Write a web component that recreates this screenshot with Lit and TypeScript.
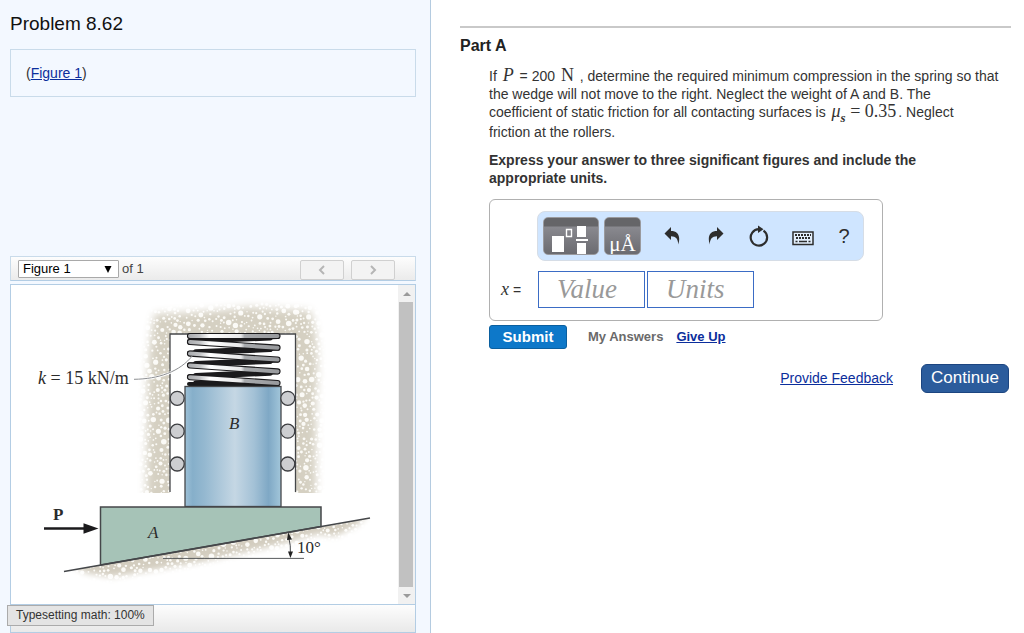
import { LitElement, html, svg, css } from "lit";
import { customElement, state } from "lit/decorators.js";

interface Pebble {
  x: number;
  y: number;
  r: number;
}

/** Scatters non-overlapping pebbles over an area; the sequence is repeatable. */
function scatter(x0: number, y0: number, x1: number, y1: number, tries: number, seed: number): Pebble[] {
  let s = seed;
  const next = () => {
    s = (s * 1664525 + 1013904223) % 4294967296;
    return s / 4294967296;
  };
  const out: Pebble[] = [];
  for (let i = 0; i < tries; i++) {
    const big = i < tries * 0.06;
    const p = {
      x: x0 + next() * (x1 - x0),
      y: y0 + next() * (y1 - y0),
      r: big ? 2 + next() * 0.8 : 0.7 + next() * 0.9,
    };
    if (out.every((q) => Math.hypot(q.x - p.x, q.y - p.y) > q.r + p.r + 0.7)) out.push(p);
  }
  return out;
}

const WALL_PEBBLES = [
  ...scatter(138, 304, 170, 493, 900, 11),
  ...scatter(170, 304, 296, 334, 560, 23),
  ...scatter(296, 304, 326, 493, 860, 37),
];
const SLOPE_PEBBLES = scatter(60, 516, 372, 586, 3000, 51);

const FRONT_COILS = [
  [336, 336],
  [342, 347.7],
  [353.6, 359.6],
  [365.4, 371.4],
  [377.2, 383],
];
const BACK_COILS = [
  [337, 341],
  [348.6, 352.8],
  [360.4, 364.6],
  [372.2, 376.4],
  [384, 384],
];
const ROLLERS = [398.3, 431.2, 464];

@customElement("wedge-figure")
export class WedgeFigure extends LitElement {
  static styles = css`
    :host {
      display: block;
    }
    svg {
      display: block;
      width: 100%;
      height: auto;
    }
    text {
      font-family: "Liberation Serif", serif;
      font-size: 17px;
      fill: #2b2b2b;
    }
    .it {
      font-style: italic;
    }
    .large {
      font-size: 18px;
    }
    .bold {
      font-weight: bold;
    }
    .ink {
      stroke: #45474a;
      fill: none;
    }
  `;

  render() {
    return html`
      <svg viewBox="11 286 387 318" role="img" aria-label="Wedge A under spring-loaded block B">
        <defs>
          <linearGradient id="block" x1="0" x2="1" y1="0" y2="0">
            <stop offset="0" stop-color="#9dc0d6" />
            <stop offset="0.08" stop-color="#86afca" />
            <stop offset="0.2" stop-color="#94b8d0" />
            <stop offset="0.52" stop-color="#c5d7e4" />
            <stop offset="0.72" stop-color="#a3c1d6" />
            <stop offset="0.87" stop-color="#7fa8c5" />
            <stop offset="1" stop-color="#a2c6da" />
          </linearGradient>
          <linearGradient id="coil" gradientUnits="userSpaceOnUse" x1="187" x2="280" y1="0" y2="0">
            <stop offset="0" stop-color="#a5a7aa" />
            <stop offset="0.14" stop-color="#c4c5c7" />
            <stop offset="0.24" stop-color="#ffffff" />
            <stop offset="0.58" stop-color="#e8e8e9" />
            <stop offset="0.62" stop-color="#a8aaad" />
            <stop offset="1" stop-color="#97999c" />
          </linearGradient>
          <filter id="soft" x="-20%" y="-20%" width="140%" height="140%">
            <feGaussianBlur stdDeviation="4" />
          </filter>
          <filter id="softer" x="-20%" y="-40%" width="140%" height="180%">
            <feGaussianBlur stdDeviation="3" />
          </filter>
          <mask id="wallFade" maskUnits="userSpaceOnUse" x="120" y="290" width="230" height="203">
            <path
              d="M155 314 Q200 313 250 307 L310 311 Q321 340 316 400 L316 520 L146 520 L147 400 Q148 340 155 314Z"
              fill="#fff"
              filter="url(#soft)"
            />
          </mask>
          <mask id="slopeFade" maskUnits="userSpaceOnUse" x="50" y="500" width="340" height="100">
            <path
              d="M70 564 L86 573 L112 577 L200 562 L270 547 L318 534 L335 536 L356 526 L368 515Z"
              fill="#fff"
              filter="url(#softer)"
            />
          </mask>
          <clipPath id="underSlope">
            <path d="M64 571.5 L370 518 L370 600 L64 600Z" />
          </clipPath>
        </defs>

        <g mask="url(#wallFade)">
          <rect x="120" y="290" width="230" height="203" fill="#d5d0c2" />
          ${WALL_PEBBLES.map((p) => svg`<circle cx=${p.x} cy=${p.y} r=${p.r} fill="#fbfaf6" />`)}
        </g>
        <path d="M170 494 V334 H295.5 V494Z" fill="#fff" />
        <path class="ink" d="M170 492 V334 H295.5 V492" stroke-width="1.3" />

        <g stroke-linecap="round">
          ${BACK_COILS.map(
            ([r, l]) => svg`
              <path d="M189 ${l} L278 ${r}" stroke="#1b1a1c" stroke-width="4" />
              <path d="M196 ${l - 0.5} L270 ${r + 0.5}" stroke="#1b1a1c" stroke-width="6" />`
          )}
          ${FRONT_COILS.map(
            ([l, r]) => svg`
              <path d="M190 ${l} L277.500 ${r + 0.01}" stroke="#1b1a1c" stroke-width="6.2" />
              <path d="M190 ${l} L277.500 ${r + 0.01}" stroke="url(#coil)" stroke-width="4" />`
          )}
        </g>

        <rect class="ink" x="185" y="386.5" width="96" height="120" style="fill:url(#block)" stroke-width="1.3" />
        ${ROLLERS.map(
          (y) => svg`
            <circle cx="177.2" cy=${y} r="7" fill="#cdced1" stroke="#3c3d40" stroke-width="1.3" />
            <circle cx="287.8" cy=${y} r="7" fill="#cdced1" stroke="#3c3d40" stroke-width="1.3" />`
        )}

        <g clip-path="url(#underSlope)">
          <g mask="url(#slopeFade)">
            <rect x="50" y="500" width="340" height="100" fill="#d3cdbf" />
            ${SLOPE_PEBBLES.map((p) => svg`<circle cx=${p.x} cy=${p.y} r=${p.r} fill="#fbfaf6" />`)}
          </g>
        </g>
        <path d="M100.5 507 H321 V526.6 L100.5 565.1Z" fill="#a6c3b7" stroke="#45474a" stroke-width="1.5" />
        <path class="ink" d="M64 571.5 L370 518" stroke-width="1.6" />
        <path class="ink" d="M163 558.4 H304" stroke-width="0.9" />

        <path class="ink" d="M288.6 536 Q291 546 290.4 555" stroke-width="1" />
        <path d="M288.2 532.6 L292 539.4 L287 540Z M290.4 558 L288 551.4 L293 551.6Z" fill="#222" />

        <path d="M44 528.5 H86" stroke="#1b1a1c" stroke-width="2.6" />
        <path d="M98.5 528.5 L83.5 523.2 V533.8Z" fill="#1b1a1c" />
        <path d="M134 379.3 C158 379 180 372 190 358" fill="none" stroke="#fff" stroke-width="2.4" />
        <path d="M134 379.3 C158 379 180 372 193 355" fill="none" stroke="#8d8f92" stroke-width="1" />

        <text class="large" x="38" y="384"><tspan class="it">k</tspan> = 15 kN/m</text>
        <text class="it" x="229" y="429">B</text>
        <text class="it" x="148" y="538">A</text>
        <text class="bold" x="53" y="520">P</text>
        <text x="297" y="553">10°</text>
      </svg>
    `;
  }
}

@customElement("app-root")
export class AppRoot extends LitElement {
  @state() private value = "";
  @state() private units = "";

  static styles = css`
    :host {
      display: block;
      font-family: "Liberation Sans", Arial, sans-serif;
      font-size: 14px;
      line-height: 18px;
      color: #333;
      background: #fff;
    }
    * {
      box-sizing: border-box;
    }
    button,
    input,
    select {
      font: inherit;
      margin: 0;
      padding: 0;
    }
    a {
      color: #0b2e9c;
    }
    .page {
      display: grid;
      grid-template-columns: 431px minmax(0, 1fr);
      min-height: 100vh;
    }
    .side {
      display: flex;
      flex-direction: column;
      padding: 13px 14px 0 10px;
      background: #f3f8ff;
      border-right: 1px solid #b4cbe0;
    }
    .title {
      margin: 0;
      font-size: 19px;
      line-height: 22px;
      font-weight: normal;
      color: #111;
    }
    .intro {
      margin: 14px 0 0;
      padding: 14px 15px;
      border: 1px solid #c9dbea;
    }
    .viewer {
      margin-top: auto;
    }
    .bar {
      display: flex;
      align-items: center;
      height: 25px;
      padding: 0 20px 0 7px;
      font-size: 13px;
      color: #444;
      border: 1px solid #c9dbea;
      border-bottom-color: #b3cde4;
      background: linear-gradient(#fdfdfd, #ebebeb);
    }
    .pick {
      display: grid;
      width: 101px;
      margin-right: 3px;
    }
    .pick select,
    .pick svg {
      grid-area: 1 / 1;
    }
    .pick select {
      appearance: none;
      height: 18px;
      padding-left: 4px;
      line-height: 16px;
      color: #000;
      background: #fff;
      border: 1px solid #a9a9a9;
      border-radius: 1px;
    }
    .pick svg {
      justify-self: end;
      align-self: center;
      margin-right: 7px;
      pointer-events: none;
    }
    .steps {
      display: flex;
      gap: 7px;
      margin-left: auto;
      align-self: flex-end;
    }
    .step {
      display: grid;
      place-items: center;
      width: 44px;
      height: 20px;
      background: #f3f3f3;
      border: 1px solid #d0d0d0;
      border-radius: 2px;
    }
    .frame {
      display: flex;
      margin-top: 3px;
      background: #fff;
      border: 1px solid #b3cde4;
      border-bottom: 0;
    }
    .frame wedge-figure {
      flex: 1;
      margin-top: 1px;
    }
    .scroll {
      display: flex;
      flex-direction: column;
      width: 17px;
      background: #f1f1f1;
    }
    .arrow {
      display: grid;
      place-items: center;
      height: 17px;
      border: 0;
      background: none;
    }
    .thumb {
      flex: 1;
      margin: 0 2px 0 1px;
      background: #c1c1c1;
    }
    .foot {
      height: 29px;
      border: 1px solid #b3cde4;
      background: linear-gradient(#fdfdfd, #e9e9e9);
    }
    .status {
      position: fixed;
      left: 7px;
      bottom: 7px;
      padding: 1px 8px;
      font-size: 12px;
      line-height: 17px;
      color: #333;
      background: #e4e4e4;
      border: 1px solid #ababab;
    }
    .main {
      padding: 26px 13px 0 29px;
    }
    .rule {
      height: 2px;
      margin: 0;
      border: 0;
      background: #c9c9c9;
    }
    .part {
      margin: 9px 0 0;
      font-size: 16px;
      color: #222;
    }
    .body {
      padding-left: 29px;
    }
    .task {
      margin: 12px 0 0;
    }
    .task p {
      margin: 0;
      white-space: nowrap;
    }
    .task .ask {
      margin-top: 10px;
      font-weight: bold;
    }
    .math {
      margin: 0 2px;
      font-family: "Liberation Serif", serif;
      font-size: 18px;
      line-height: 16px;
    }
    .math sub {
      font-size: 13px;
      font-weight: bold;
      line-height: 10px;
    }
    .answer {
      width: 394px;
      margin-top: 12px;
      padding: 11px 18px 12px 11px;
      border: 1px solid #b0b0b0;
      border-radius: 6px;
    }
    .tools {
      display: flex;
      align-items: center;
      height: 50px;
      margin-left: 36px;
      padding-left: 5px;
      border: 1px solid #d6dde6;
      border-radius: 8px;
      background: #cfe5ff;
    }
    .tool {
      display: grid;
      place-items: center;
      flex: 1;
      height: 38px;
      border: 0;
      color: #2d2d2d;
      background: none;
    }
    .tile {
      flex: none;
      overflow: hidden;
      color: #fff;
      border: 1px solid #9a9a9e;
      border-radius: 5px;
      background: linear-gradient(#656568 0 8px, #89898f 9px, #6b6b70);
    }
    .wide {
      width: 56px;
      margin-right: 5px;
    }
    .narrow {
      width: 37px;
      margin-right: 9px;
      place-items: end center;
      font-family: "Liberation Serif", serif;
      font-size: 21px;
      line-height: 20px;
    }
    .help {
      flex: none;
      width: 38px;
      font-size: 20px;
    }
    .row {
      display: flex;
      align-items: center;
      gap: 2px;
      margin-top: 10px;
    }
    .var {
      width: 35px;
      font-size: 14px;
    }
    .var i {
      font-family: "Liberation Serif", serif;
      font-size: 18px;
    }
    .field {
      width: 107px;
      height: 37px;
      padding-left: 18px;
      font-family: "Liberation Serif", serif;
      font-size: 27px;
      font-style: italic;
      color: #222;
      background: #fff;
      border: 1px solid #3b6cc5;
    }
    .field::placeholder {
      color: #999;
      opacity: 1;
    }
    .actions {
      display: flex;
      align-items: center;
      margin-top: 4px;
      font-size: 13px;
      font-weight: bold;
    }
    .submit {
      width: 78px;
      height: 24px;
      margin-right: 21px;
      font-size: 15px;
      font-weight: bold;
      color: #fff;
      background: #0d78c9;
      border: 1px solid #0a5f9f;
      border-radius: 3px;
    }
    .mine {
      margin-right: 13px;
      color: #6a6a6a;
    }
    .next {
      display: flex;
      justify-content: flex-end;
      align-items: center;
      gap: 28px;
      margin: 15px 2px 0 0;
    }
    .continue {
      width: 88px;
      height: 29px;
      font-size: 17px;
      color: #fff;
      background: #2b5c9c;
      border: 1px solid #1c4580;
      border-radius: 6px;
    }
  `;

  render() {
    return html`
      <div class="page">
        <aside class="side">
          <h1 class="title">Problem 8.62</h1>
          <p class="intro">(<a href="#figure">Figure 1</a>)</p>
          <section class="viewer" id="figure">
            <div class="bar">
              <span class="pick">
                <select id="fig" aria-label="Figure">
                  <option>Figure 1</option>
                </select>
                <svg width="8" height="8" viewBox="0 0 8 8"><path d="M0.5 1h7L4 8Z" fill="#000" /></svg>
              </span>
              <label for="fig">of 1</label>
              <span class="steps">
                <button class="step" aria-label="Previous figure">
                  <svg width="10" height="10" viewBox="0 0 10 10">
                    <path d="M7 1 3 5l4 4" fill="none" stroke="#b5b5b5" stroke-width="2" />
                  </svg>
                </button>
                <button class="step" aria-label="Next figure">
                  <svg width="10" height="10" viewBox="0 0 10 10">
                    <path d="m3 1 4 4-4 4" fill="none" stroke="#b5b5b5" stroke-width="2" />
                  </svg>
                </button>
              </span>
            </div>
            <div class="frame">
              <wedge-figure></wedge-figure>
              <div class="scroll">
                <button class="arrow" aria-label="Scroll up">
                  <svg width="8" height="4" viewBox="0 0 8 4"><path d="M0 4 4 0l4 4Z" fill="#9a9a9a" /></svg>
                </button>
                <div class="thumb"></div>
                <button class="arrow" aria-label="Scroll down">
                  <svg width="8" height="4" viewBox="0 0 8 4"><path d="m0 0 4 4 4-4Z" fill="#9a9a9a" /></svg>
                </button>
              </div>
            </div>
            <div class="foot"></div>
          </section>
        </aside>

        <main class="main">
          <hr class="rule" />
          <h2 class="part">Part A</h2>
          <div class="body">
            <div class="task">
              <p>
                If <span class="math"><i>P</i></span> = 200 <span class="math">N</span> , determine the required
                minimum compression in the spring so that<br />
                the wedge will not move to the right. Neglect the weight of A and B. The<br />
                coefficient of static friction for all contacting surfaces is
                <span class="math"><i>μ<sub>s</sub></i> = 0.35</span>. Neglect<br />
                friction at the rollers.
              </p>
              <p class="ask">
                Express your answer to three significant figures and include the<br />
                appropriate units.
              </p>
            </div>

            <div class="answer">
              <div class="tools">
                <button class="tool tile wide" aria-label="Templates">
                  <svg width="54" height="36" viewBox="544 218 54 36">
                    <path d="M552 236h12v16h-12zM577 226h9v11h-9zM577 243h9v11h-9zM576 239h12v2h-12z" fill="#fff" />
                    <path d="M566.5 229.5h5v7h-5z" fill="none" stroke="#fff" stroke-width="1.4" />
                  </svg>
                </button>
                <button class="tool tile narrow" aria-label="Symbols">μÅ</button>
                <button class="tool" aria-label="Undo">
                  <svg width="16" height="18" viewBox="0 0 16 18">
                    <path d="M0.5 6.5 7 0v4c6.500 0 10 4.500 7.300 13.500C14 12 12 9.300 7 9.200V13Z" fill="currentColor" />
                  </svg>
                </button>
                <button class="tool" aria-label="Redo">
                  <svg width="16" height="18" viewBox="0 0 16 18">
                    <path d="M15.500 6.500 9 0v4C2.500 4-1 8.500 1.700 17.500 2 12 4 9.300 9 9.200V13Z" fill="currentColor" />
                  </svg>
                </button>
                <button class="tool" aria-label="Reset">
                  <svg width="20" height="22" viewBox="0 0 20 22">
                    <path d="M14.500 5.600A8.200 8.200 0 1 1 10 4.200" fill="none" stroke="currentColor" stroke-width="2.200" />
                    <path d="M9 0.500 14.500 4.200 9 8Z" fill="currentColor" />
                  </svg>
                </button>
                <button class="tool" aria-label="Keyboard">
                  <svg width="22" height="20" viewBox="0 0 22 20">
                    <path d="M1 6h20v12.500H1z" fill="#e3effc" stroke="currentColor" stroke-width="1.500" />
                    <path d="M3 9h16M4 12h14" stroke="currentColor" stroke-width="2" stroke-dasharray="2 1" />
                    <path d="M3.500 15.500h2M7 15.500h8M16.500 15.500h2" stroke="currentColor" stroke-width="1.600" />
                  </svg>
                </button>
                <button class="tool help" aria-label="Help">?</button>
              </div>
              <div class="row">
                <label class="var" for="value"><i>x</i> =</label>
                <input
                  class="field"
                  id="value"
                  placeholder="Value"
                  .value=${this.value}
                  @input=${(e: Event) => (this.value = (e.target as HTMLInputElement).value)}
                />
                <input
                  class="field"
                  aria-label="Units"
                  placeholder="Units"
                  .value=${this.units}
                  @input=${(e: Event) => (this.units = (e.target as HTMLInputElement).value)}
                />
              </div>
            </div>

            <div class="actions">
              <button class="submit">Submit</button>
              <span class="mine">My Answers</span>
              <a href="#give-up">Give Up</a>
            </div>
          </div>
          <div class="next">
            <a href="#feedback">Provide Feedback</a>
            <button class="continue">Continue</button>
          </div>
        </main>
      </div>
      <div class="status" role="status">Typesetting math: 100%</div>
    `;
  }
}
